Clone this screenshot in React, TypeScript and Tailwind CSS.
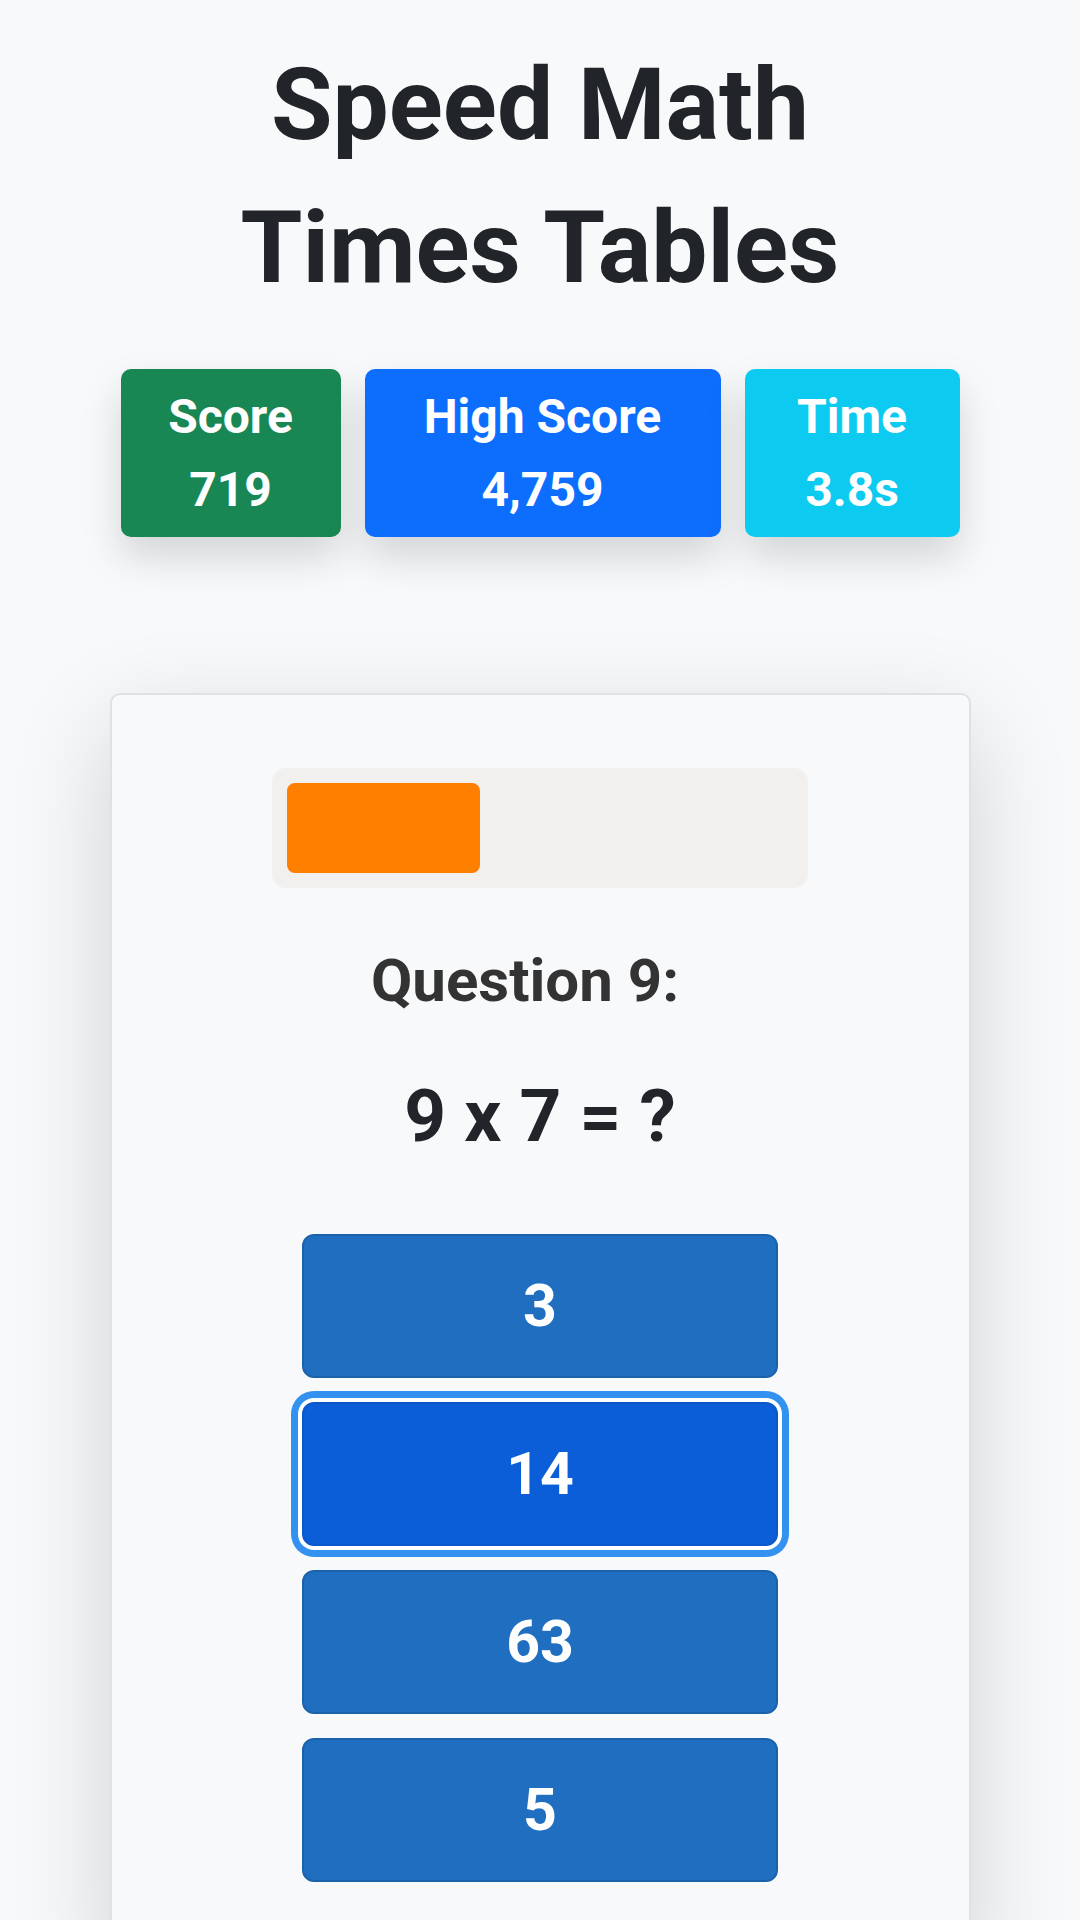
import React from "react"

const stats = [
  { label: "Score", value: "719", cls: "w-[220px] bg-[#198754]" },
  { label: "High Score", value: "4,759", cls: "w-[356px] bg-[#0d6efd]" },
  { label: "Time", value: "3.8s", cls: "w-[215px] bg-[#0dcaf0]" },
]

const answers = ["3", "14", "63", "5"]

export default function App() {
  const focused = 1
  const progress = 193

  return (
    <div className="min-h-screen w-full bg-[#f8f9fa] font-['Roboto','Liberation_Sans',sans-serif] text-[#212529]">
      <div className="flex flex-col items-center pt-[33px]">
        <h1 className="text-center text-[100px] leading-[143px] font-bold">
          Speed Math
          <br />
          Times Tables
        </h1>

        {/* stat cards */}
        <div className="mt-[50px] flex gap-6">
          {stats.map((s) => (
            <div
              key={s.label}
              className={`${s.cls} rounded-[10px] py-[11px] text-center text-white font-bold text-[48px] leading-[73px] shadow-[0_20px_40px_rgba(0,0,0,0.15)]`}
            >
              <div>{s.label}</div>
              <div>{s.value}</div>
            </div>
          ))}
        </div>

        {/* game card */}
        <div className="mt-[156px] w-[861px] rounded-[10px] border-2 border-[#dee2e6] bg-[#f8f9fa] pt-[73px] pb-[80px] flex flex-col items-center shadow-[0_32px_100px_rgba(0,0,0,0.16)]">
          <div className="w-[536px] h-[120px] rounded-[14px] bg-[#f1f0ef] p-[15px]">
            <div className="h-full rounded-[8px] bg-[#ff8000]" style={{ width: progress }} />
          </div>

          <div className="mt-[58px] pr-[30px] text-[60px] leading-[70px] font-bold text-[#333333]">Question 9:</div>
          <div className="mt-[55px] text-[73px] leading-[90px] font-bold text-[#212529]">9 x 7 = ?</div>

          <div className="mt-[73px] flex flex-col gap-[24px]">
            {answers.map((a, i) => (
              <button
                key={a}
                className={
                  i === focused
                    ? "w-[476px] h-[144px] rounded-[12px] border-2 border-[#0a58ca] bg-[#0b5ed7] text-white text-[59px] font-bold shadow-[0_0_0_4px_#ffffff,0_0_0_11px_#3391f0]"
                    : "w-[476px] h-[144px] rounded-[12px] border-2 border-[#1b62ad] bg-[#1f6ebf] text-white text-[59px] font-bold"
                }
              >
                {a}
              </button>
            ))}
          </div>
        </div>
      </div>
    </div>
  )
}
